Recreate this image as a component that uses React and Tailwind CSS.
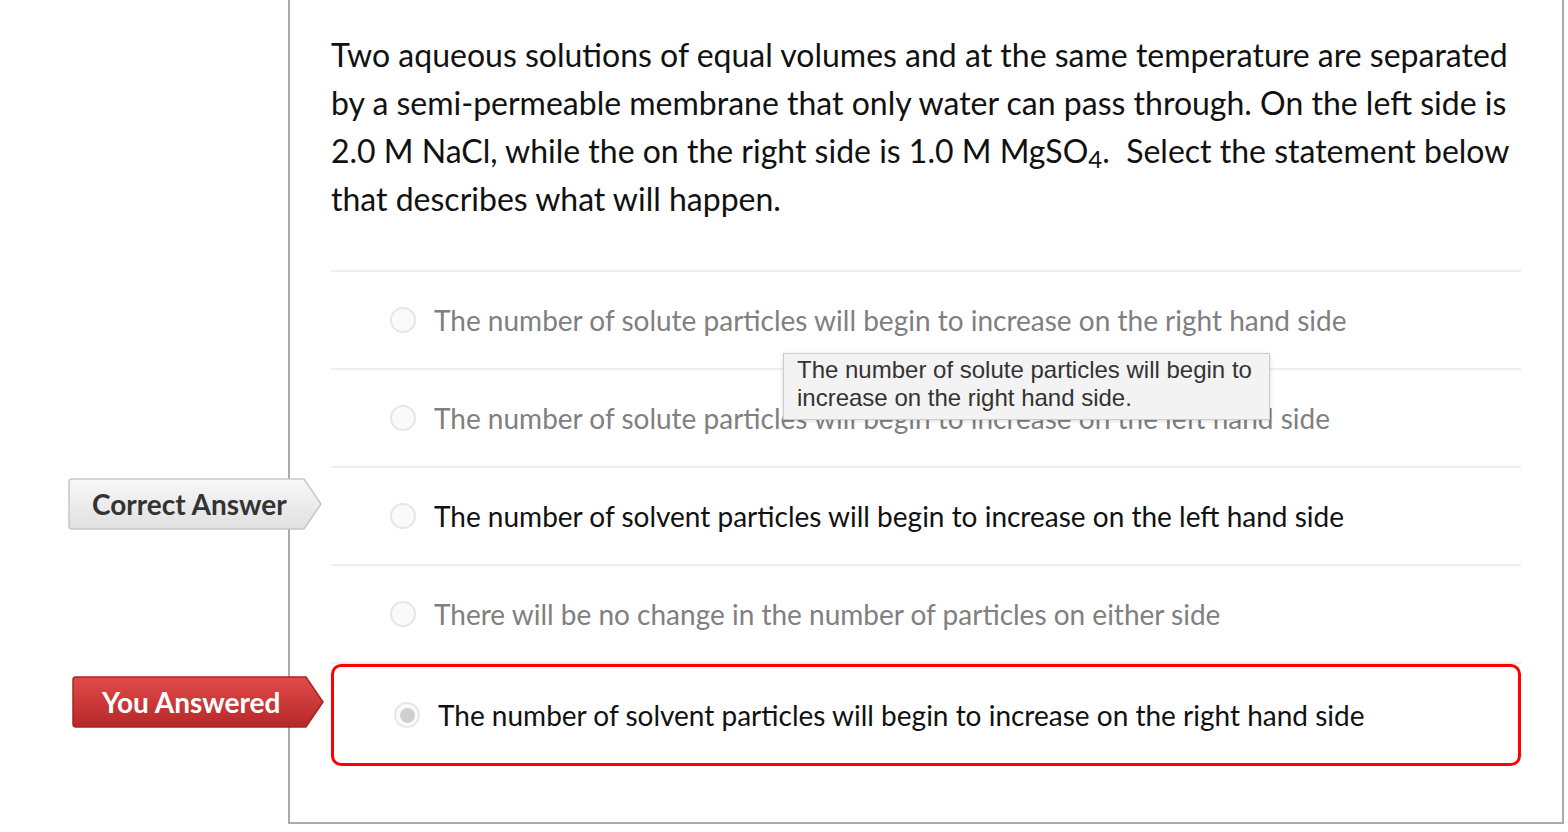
import React from 'react'

const lato = { fontFamily: 'Lato, "Open Sans", sans-serif' }

function Radio({ checked }) {
    return (
        <span className="flex h-[26px] w-[26px] shrink-0 items-center justify-center rounded-full border-2 border-[#e6e6e6] bg-[#fafafa]">
            {checked && <span className="h-[15px] w-[15px] rounded-full bg-[#cfcfcf]" />}
        </span>
    )
}

function Tag({ kind }) {
    const red = kind === 'red'
    const w = red ? 252 : 254
    const h = 52
    const d = `M4 1 H${w - 18} L${w - 1} ${h / 2} L${w - 18} ${h - 1} H4 Q1 ${h - 1} 1 ${h - 4} V4 Q1 1 4 1 Z`
    return (
        <div className="relative" style={{ width: w, height: h }}>
            <svg width={w} height={h} className="absolute inset-0">
                <defs>
                    <linearGradient id={`g-${kind}`} x1="0" y1="0" x2="0" y2="1">
                        <stop offset="0" stopColor={red ? '#e24a4a' : '#f8f8f8'} />
                        <stop offset="1" stopColor={red ? '#b52828' : '#e0e0e0'} />
                    </linearGradient>
                </defs>
                <path d={d} fill={`url(#g-${kind})`} stroke={red ? '#a82424' : '#c6c6c6'} strokeWidth="1.5" />
            </svg>
            <div
                className={
                    red
                        ? 'relative flex h-full items-center pl-[30px] text-[28px] font-bold text-white'
                        : 'relative flex h-full items-center pl-[24px] text-[28px] font-bold text-[#333]'
                }
                style={lato}
            >
                {red ? 'You Answered' : 'Correct Answer'}
            </div>
        </div>
    )
}

export default function App() {
    const answers = [
        { text: 'The number of solute particles will begin to increase on the right hand side', faded: true },
        { text: 'The number of solute particles will begin to increase on the left hand side', faded: true },
        { text: 'The number of solvent particles will begin to increase on the left hand side', correct: true },
        { text: 'There will be no change in the number of particles on either side', faded: true },
    ]

    return (
        <div className="flex h-[832px] w-[1568px] overflow-hidden bg-white" style={lato}>
            <div className="w-[288px] shrink-0" />
            <div className="h-[824px] w-[1276px] border-x-2 border-b-2 border-[#aaaaaa] px-[41px] pt-[31px]">
                <p className="whitespace-nowrap text-[32px] leading-[48px] text-[#111]">
                    Two aqueous solutions of equal volumes and at the same temperature are separated
                    <br />
                    by a semi-permeable membrane that only water can pass through. On the left side is
                    <br />
                    2.0 M NaCl, while the on the right side is 1.0 M MgSO
                    <sub className="relative top-[5px] text-[24px]">4</sub>.&nbsp; Select the statement below
                    <br />
                    that describes what will happen.
                </p>

                <div className="mt-[47px]">
                    {answers.map((a, i) => (
                        <div
                            key={i}
                            className="relative flex h-[98px] items-center gap-[18px] border-t-2 border-[#eeeeee] pl-[59px]"
                        >
                            {a.correct && (
                                <div className="absolute left-[-263px] top-[10px]">
                                    <Tag kind="gray" />
                                </div>
                            )}
                            <Radio />
                            <span
                                className={
                                    a.faded
                                        ? 'text-[28px] text-[#808080]'
                                        : 'text-[28px] text-[#111]'
                                }
                            >
                                {a.text}
                            </span>
                            {i === 0 && (
                                <div
                                    className="absolute left-[452px] top-[81px] z-10 w-[487px] border border-[#cccccc] bg-[#f3f3f3] px-[13px] pb-[7px] pt-[2px] text-[24px] leading-[28px] text-[#333] shadow-[0_1px_4px_rgba(0,0,0,0.15)]"
                                    style={{ fontFamily: '"Liberation Sans", Arial, sans-serif' }}
                                >
                                    The number of solute particles will begin to increase on the right hand side.
                                </div>
                            )}
                        </div>
                    ))}

                    <div className="relative border-t-2 border-[#eeeeee]">
                        <div className="absolute left-[-259px] top-[12px]">
                            <Tag kind="red" />
                        </div>
                        <div className="flex h-[102px] items-center gap-[18px] rounded-[10px] border-[3px] border-[#ff0000] pl-[60px]">
                            <Radio checked />
                            <span className="text-[28px] text-[#111]">
                                The number of solvent particles will begin to increase on the right hand side
                            </span>
                        </div>
                    </div>
                </div>
            </div>
        </div>
    )
}
